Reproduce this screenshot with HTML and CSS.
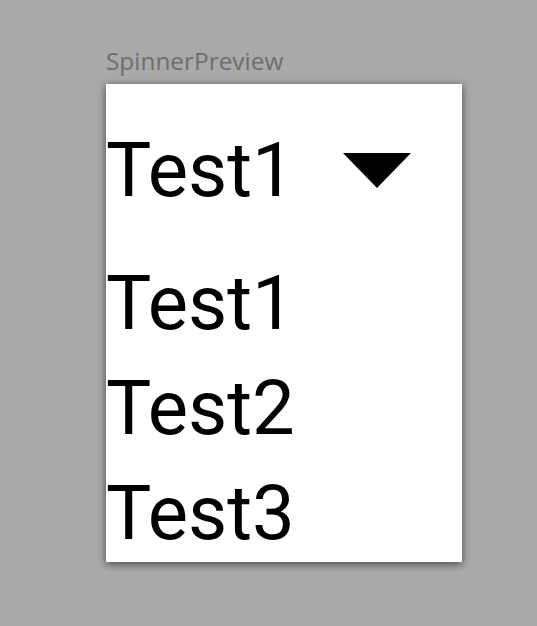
FILE: index.html
```html
<!DOCTYPE html>
<html lang="en">
  <head>
    <meta charset="UTF-8" />
    <meta name="viewport" content="width=device-width, initial-scale=1.0" />
    <title>SpinnerPreview</title>
    <link rel="stylesheet" href="styles.css">
  </head>
  <body>
    <div class="preview">
      <div class="preview-title">SpinnerPreview</div>
      <div class="spinner">
        <div class="spinner-header">
          <span class="spinner-value">Test1</span>
          <svg class="spinner-arrow" width="68" height="35" viewBox="0 0 68 35">
            <polygon points="0,0 68,0 34,35" fill="#000" />
          </svg>
        </div>
        <ul class="spinner-list">
          <li>Test1</li>
          <li>Test2</li>
          <li>Test3</li>
        </ul>
      </div>
    </div>
  </body>
</html>
```

FILE: styles.css
```css
* {
  margin: 0;
  padding: 0;
  box-sizing: border-box;
}
body {
  background-color: #a9a9a9;
  min-height: 100vh;
}
.preview {
  display: flex;
  flex-direction: column;
  padding-top: 45px;
  padding-left: 106px;
}
.preview-title {
  font-family: "Open Sans", sans-serif;
  font-size: 24.4px;
  line-height: 32px;
  color: #6e6e6e;
  margin-bottom: 7px;
}
.spinner {
  width: 356px;
  height: 478px;
  background-color: white;
  box-shadow: 0 2px 8px rgba(0, 0, 0, 0.6);
  overflow: hidden;
  font-family: Roboto, sans-serif;
  font-size: 76px;
  line-height: 105px;
  color: #000;
}
.spinner-header {
  display: flex;
  align-items: flex-start;
  padding-top: 34px;
}
.spinner-arrow {
  margin-top: 35px;
  margin-left: 48px;
}
.spinner-list {
  list-style-type: none;
  margin-top: 28px;
}
```
